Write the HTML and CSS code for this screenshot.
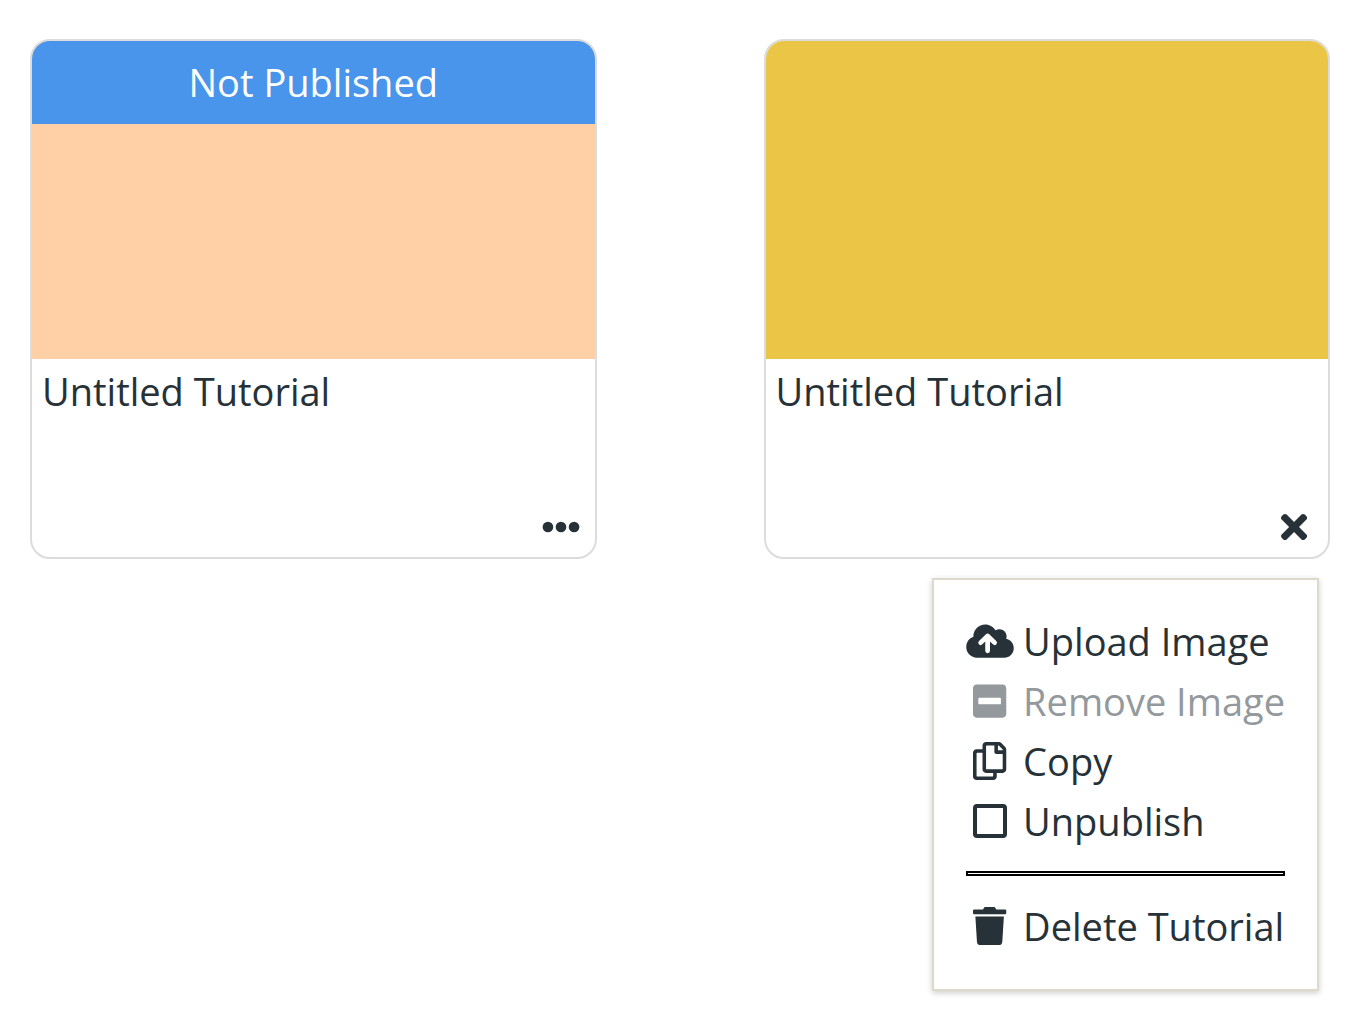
FILE: index.html
```html
<!DOCTYPE html>
<html lang="en">
<head>
    <meta charset="UTF-8">
    <meta name="viewport" content="width=device-width, initial-scale=1.0">
    <title>Tutorials</title>
    <link rel="stylesheet" href="styles.css">
</head>
<body>
    <main class="tutorials">
        <article class="card">
            <div class="card-image peach">
                <div class="banner">Not Published</div>
            </div>
            <div class="card-body">
                <h2>Untitled Tutorial</h2>
                <button type="button" class="menu-toggle" aria-label="Open menu">
                    <svg class="icon" viewBox="0 0 512 512"><circle cx="80" cy="256" r="72"/><circle cx="256" cy="256" r="72"/><circle cx="432" cy="256" r="72"/></svg>
                </button>
            </div>
        </article>

        <article class="card">
            <div class="card-image yellow"></div>
            <div class="card-body">
                <h2>Untitled Tutorial</h2>
                <button type="button" class="menu-toggle" aria-label="Close menu">
                    <svg class="icon" viewBox="0 0 352 512"><path d="M242.72 256l100.07-100.07c12.28-12.28 12.28-32.19 0-44.48l-22.24-22.24c-12.28-12.28-32.19-12.28-44.48 0L176 189.28 75.93 89.21c-12.28-12.28-32.19-12.28-44.48 0L9.21 111.45c-12.28 12.28-12.28 32.19 0 44.48L109.28 256 9.21 356.07c-12.28 12.28-12.28 32.19 0 44.48l22.24 22.24c12.28 12.28 32.2 12.28 44.48 0L176 322.72l100.07 100.07c12.28 12.28 32.2 12.28 44.48 0l22.24-22.24c12.28-12.28 12.28-32.19 0-44.48L242.72 256z"/></svg>
                </button>
            </div>

            <div class="menu">
                <button type="button" class="menu-item">
                    <span class="menu-icon">
                        <svg class="icon icon-wide" viewBox="0 0 640 512"><path d="M144 480C64.5 480 0 415.5 0 336c0-62.8 40.2-116.2 96.2-135.9c-.1-2.7-.2-5.4-.2-8.1c0-88.4 71.6-160 160-160c59.3 0 111 32.2 138.7 80.2C409.9 102 428.3 96 448 96c53 0 96 43 96 96c0 12.2-2.3 23.8-6.4 34.6C596 238.4 640 290.1 640 352c0 70.7-57.3 128-128 128H144z"/><path class="arrow" d="M288 388V190M194 278l94-90 94 90"/></svg>
                    </span>
                    Upload Image
                </button>
                <button type="button" class="menu-item" disabled>
                    <span class="menu-icon">
                        <svg class="icon" viewBox="0 0 448 512"><path d="M400 32H48C21.5 32 0 53.5 0 80v352c0 26.5 21.5 48 48 48h352c26.5 0 48-21.5 48-48V80c0-26.5-21.5-48-48-48zM84 300c-6.6 0-12-5.4-12-12v-64c0-6.6 5.4-12 12-12h280c6.6 0 12 5.4 12 12v64c0 6.6-5.4 12-12 12H84z"/></svg>
                    </span>
                    Remove Image
                </button>
                <button type="button" class="menu-item">
                    <span class="menu-icon">
                        <svg class="icon" viewBox="0 0 448 512"><path d="M433.941 65.941l-51.882-51.882A48 48 0 0 0 348.118 0H176c-26.51 0-48 21.49-48 48v48H48c-26.51 0-48 21.49-48 48v320c0 26.51 21.49 48 48 48h224c26.51 0 48-21.49 48-48v-48h80c26.51 0 48-21.49 48-48V99.882a48 48 0 0 0-14.059-33.941zM266 464H54a6 6 0 0 1-6-6V150a6 6 0 0 1 6-6h74v224c0 26.51 21.49 48 48 48h96v42a6 6 0 0 1-6 6zm128-96H182a6 6 0 0 1-6-6V54a6 6 0 0 1 6-6h106v88c0 13.255 10.745 24 24 24h88v202a6 6 0 0 1-6 6zm6-256h-64V48h9.632c1.591 0 3.117.632 4.243 1.757l48.368 48.368a6 6 0 0 1 1.757 4.243V112z"/></svg>
                    </span>
                    Copy
                </button>
                <label class="menu-item">
                    <span class="menu-icon"><input type="checkbox" name="unpublish"></span>
                    Unpublish
                </label>
                <hr>
                <button type="button" class="menu-item">
                    <span class="menu-icon">
                        <svg class="icon" viewBox="0 0 448 512"><path d="M432 32H312l-9.4-18.7A24 24 0 0 0 281.1 0H166.8a23.72 23.72 0 0 0-21.4 13.3L136 32H16A16 16 0 0 0 0 48v32a16 16 0 0 0 16 16h416a16 16 0 0 0 16-16V48a16 16 0 0 0-16-16zM53.2 467a48 48 0 0 0 47.9 45h245.8a48 48 0 0 0 47.9-45L416 128H32z"/></svg>
                    </span>
                    Delete Tutorial
                </button>
            </div>
        </article>
    </main>
</body>
</html>
```
FILE: styles.css
```css
* {
    margin: 0;
    padding: 0;
    box-sizing: border-box;
}
body {
    min-height: 100vh;
    background: #fff;
    color: #263238;
    font-family: "Open Sans", "Noto Sans", sans-serif;
    font-size: 38px;
    line-height: 60px;
}
.tutorials {
    display: grid;
    grid-template-columns: 1fr 1fr;
    align-items: start;
    gap: 167px;
    min-height: 100vh;
    padding: 39px 20px 24px 30px;
}
.card {
    position: relative;
    border: 2px solid #dcdcdc;
    border-radius: 20px;
    background: #fff;
}
.card-image {
    height: 318px;
    border-radius: 18px 18px 0 0;
    overflow: hidden;
}
.peach {
    background: #ffcfa5;
}
.yellow {
    background: #ebc646;
}
.banner {
    padding: 11px 12px 12px;
    background: #4895eb;
    color: #fff;
    text-align: center;
}
.card-body {
    display: flex;
    flex-direction: column;
    justify-content: space-between;
    min-height: 198px;
    padding: 2px 12px 11px 10px;
}
.card-body h2 {
    font-size: 38px;
    font-weight: 400;
}
.menu-toggle {
    display: flex;
    align-self: flex-end;
    justify-content: center;
    width: 44px;
    border: none;
    background: none;
    color: inherit;
    cursor: pointer;
}
.icon {
    height: 38px;
    fill: currentColor;
}
.icon-wide {
    width: 48px;
}
.arrow {
    fill: none;
    stroke: #fff;
    stroke-width: 64;
    stroke-linecap: round;
    stroke-linejoin: round;
}
.menu {
    position: absolute;
    top: 537px;
    right: 9px;
    z-index: 1;
    width: max-content;
    padding: 31px 32px 33px;
    border: 2px solid #dedacb;
    background: #fff;
    box-shadow: 0 2px 6px rgba(0, 0, 0, 0.2);
}
.menu-item {
    display: flex;
    align-items: center;
    gap: 9px;
    width: 100%;
    border: none;
    background: none;
    color: inherit;
    font: inherit;
    text-align: left;
    cursor: pointer;
}
.menu-item:disabled {
    color: #93999c;
    cursor: default;
}
.menu-icon {
    display: flex;
    justify-content: center;
    width: 48px;
}
.menu input {
    appearance: none;
    width: 34px;
    height: 34px;
    border: 4px solid #263238;
    border-radius: 4px;
}
.menu input:checked {
    background: #263238;
}
.menu hr {
    height: 5px;
    margin: 20px 0;
    border: 2px solid #000;
}
```
